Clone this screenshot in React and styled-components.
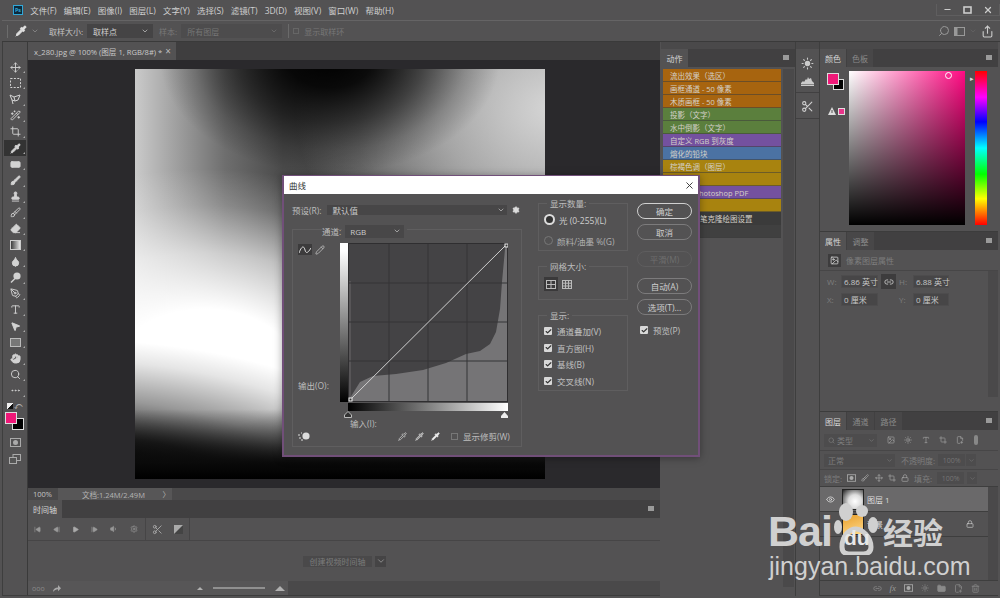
import React from 'react';
import styled, { createGlobalStyle } from 'styled-components';
import {
  Move, Wand2, Crop, Pipette, Bandage, Brush, Stamp, Eraser, Droplet, Search, PenTool, Type,
  MousePointer2, Hand, MoreHorizontal, ChevronDown, X, Minus, Share, Settings, Link2, Scissors, Play,
  SkipBack, StepBack, StepForward, Volume1, Lock, Eye, Folder, FilePlus2, Trash2, Image, Pencil, Check,
  Sun,
} from 'lucide-react';

const Global = createGlobalStyle`
  html, body { margin: 0; padding: 0; background: #535253; }
  * { box-sizing: border-box; }
  body { font-family: "Open Sans", "Noto Sans CJK SC", sans-serif; font-size: 8px; color: #c4c4c4; }
`;

const menus = ['文件(F)', '编辑(E)', '图像(I)', '图层(L)', '文字(Y)', '选择(S)', '滤镜(T)', '3D(D)', '视图(V)', '窗口(W)', '帮助(H)'];

const tools = [
  [Move], [null, 'marquee'], [null, 'lasso'], [Wand2], [Crop], [Pipette], [Bandage], [Brush], [Stamp], [Brush], [Eraser],
  [null, 'gradient'], [Droplet], [null, 'dodge'], [PenTool], [Type], [MousePointer2], [null, 'rect'], [Hand], [Search], [MoreHorizontal],
];
const filledTools = [5, 6, 7, 8, 10, 12, 16, 18];

const actions = [
  ['流出效果（选区）', '#a7640f'], ['画框通道 - 50 像素', '#a7640f'], ['木质画框 - 50 像素', '#a7640f'],
  ['投影（文字）', '#5b7f3d'], ['水中倒影（文字）', '#5b7f3d'], ['自定义 RGB 到灰度', '#74519f'],
  ['熔化的铅块', '#4b72a3'], ['棕褐色调（图层）', '#a8830f'], ['四分颜色', '#a8830f'],
  ['存储为 Photoshop PDF', '#74519f'], ['渐变映射', '#a8830f'], ['混合器画笔克隆绘图设置', '#3b3b3b'], ['', '#404040'],
];

const App = () => (
  <Shell>
    <Global />
    <MenuBar>
      <PsLogo>Ps</PsLogo>
      {menus.map((m) => <MenuItem key={m}>{m}</MenuItem>)}
      <WindowButtons>
        <Minus size={9} strokeWidth={3} />
        <MaxIcon />
        <X size={10} strokeWidth={3} />
      </WindowButtons>
    </MenuBar>

    <OptionsBar>
      <Grip />
      <Pipette size={12} color="#e0e0e0" fill="#e0e0e0" />
      <ChevronDown size={8} color="#999" />
      <OptLabel $ml={6}>取样大小:</OptLabel>
      <OptSelect $w={66}>取样点<ChevronDown size={8} /></OptSelect>
      <OptLabel $dim $ml={2}>样本:</OptLabel>
      <OptSelect $w={101} $dim>所有图层<ChevronDown size={8} /></OptSelect>
      <OptDivider />
      <OptCheck />
      <OptLabel $dim $ml={1}>显示取样环</OptLabel>
      <OptRight>
        <Search size={12} color="#999" style={{ transform: 'scaleX(-1)' }} />
        <WorkspaceIcon />
        <ChevronDown size={8} color="#666" />
        <Share size={13} color="#ccc" />
      </OptRight>
    </OptionsBar>

    <Main>
      <ToolBar>
        {tools.map(([Icon, kind], i) => (
          <Tool key={i} $active={i === 5}>
            {Icon && <Icon size={11} color="#d2d2d2" fill={filledTools.includes(i) ? '#d2d2d2' : 'none'} strokeWidth={2} />}
            {kind === 'marquee' && <MarqueeIcon />}
            {kind === 'lasso' && <LassoIcon />}
            {kind === 'gradient' && <GradientIcon />}
            {kind === 'dodge' && <DodgeIcon />}
            {kind === 'rect' && <RectIcon />}
          </Tool>
        ))}
        <SwapRow>
          <MiniSwap />
          <span>⤺</span>
        </SwapRow>
        <ToolColors>
          <BackColor />
          <ForeColor />
        </ToolColors>
        <MaskTool><MaskIcon /></MaskTool>
        <MaskTool><ScreenIcon /></MaskTool>
      </ToolBar>

      <Center>
        <TabBar>
          <DocTab>x_280.jpg @ 100% (图层 1, RGB/8#) *<TabClose>×</TabClose></DocTab>
        </TabBar>
        <DocArea>
          <Picture />
        </DocArea>
        <StatusBar>
          <Zoom>100%</Zoom>
          <DocInfo>文档:1.24M/2.49M<span>〉</span></DocInfo>
        </StatusBar>
        <Timeline>
          <PanelTabs>
            <PanelTab $active $w={34}>时间轴</PanelTab>
            <PanelMenu />
          </PanelTabs>
          <TimelineControls>
            <TimeBtns>
              <SkipBack size={7} fill="#999" color="#999" />
              <StepBack size={7} fill="#999" color="#999" />
              <Play size={7} fill="#aaa" color="#aaa" />
              <StepForward size={7} fill="#999" color="#999" />
              <Volume1 size={8} fill="#999" color="#999" />
              <Settings size={8} color="#999" />
            </TimeBtns>
            <CutBtns>
              <Scissors size={11} color="#a8a8a8" />
              <TransitionIcon />
            </CutBtns>
          </TimelineControls>
          <TimelineBody>
            <CreateBtn>创建视频时间轴</CreateBtn>
            <CreateDrop><ChevronDown size={10} /></CreateDrop>
          </TimelineBody>
          <TimelineFooter>
            <FooterLit>
              <Ooo>ooo</Ooo>
              <ArrowIcon />
              <Slider>
                <Tri $s={3} />
                <SliderTrack />
                <Tri $s={5} />
              </Slider>
            </FooterLit>
          </TimelineFooter>
        </Timeline>
      </Center>

      <ActionsColumn>
        <ArrowStrip />
        <PanelTabs>
          <PanelTab $active $w={27}>动作</PanelTab>
          <PanelMenu />
        </PanelTabs>
        <ActionsBody>
          <ActionList>
            {actions.map(([t, c], i) => <ActionRow key={i} $c={c}>{t}</ActionRow>)}
          </ActionList>
          <ScrollTrack $w={11} />
        </ActionsBody>
      </ActionsColumn>

      <IconStrip>
        <ArrowStrip />
        <StripGroup $h={44}>
          <Sun size={13} color="#ccc" fill="#ccc" />
          <HistogramIcon />
        </StripGroup>
        <StripGroup $h={26}>
          <Scissors size={13} color="#d0d0d0" />
        </StripGroup>
      </IconStrip>

      <RightColumn>
        <ArrowStrip />
        <Panel $h={183}>
          <PanelTabs>
            <PanelTab $active $w={26}>颜色</PanelTab>
            <PanelTab $w={26}>色板</PanelTab>
            <PanelMenu />
          </PanelTabs>
          <ColorBody>
            <ColorSide>
              <Swatches>
                <SwBack />
                <SwFore />
              </Swatches>
              <Gamut>
                <WarnIcon />
                <GamutChip />
              </Gamut>
            </ColorSide>
            <SvField><SvCursor /></SvField>
            <HueArrow>▸</HueArrow>
            <HueBar />
          </ColorBody>
        </Panel>

        <Panel $h={180}>
          <PanelTabs>
            <PanelTab $active $w={26}>属性</PanelTab>
            <PanelTab $w={27}>调整</PanelTab>
            <PanelMenu />
          </PanelTabs>
          <PropHead>
            <PropIcon><Image size={9} color="#ddd" /></PropIcon>
            <DimText>像素图层属性</DimText>
          </PropHead>
          <PropBody>
            <PropGrid>
              <DimText>W:</DimText>
              <PropField>6.86 英寸</PropField>
              <LinkBtn><Link2 size={10} color="#ccc" /></LinkBtn>
              <DimText>H:</DimText>
              <PropField>6.88 英寸</PropField>
              <DimText>X:</DimText>
              <PropField>0 厘米</PropField>
              <span />
              <DimText>Y:</DimText>
              <PropField>0 厘米</PropField>
            </PropGrid>
            <ScrollTrack $w={10} />
          </PropBody>
        </Panel>

        <Panel $grow>
          <PanelTabs>
            <PanelTab $active $w={26}>图层</PanelTab>
            <PanelTab $w={27}>通道</PanelTab>
            <PanelTab $w={27}>路径</PanelTab>
            <PanelMenu />
          </PanelTabs>
          <FilterRow>
            <SmallSelect $w={53}><Search size={7} />类型<ChevronDown size={7} /></SmallSelect>
            <FilterIcons>
              <Image size={8} /><Sun size={8} /><Type size={8} /><Crop size={8} /><FilePlus2 size={8} />
            </FilterIcons>
            <FilterToggle />
          </FilterRow>
          <BlendRow>
            <SmallSelect $w={71}>正常<ChevronDown size={7} /></SmallSelect>
            <DimText>不透明度:</DimText>
            <SmallBox>100%</SmallBox>
            <SmallDrop><ChevronDown size={7} /></SmallDrop>
          </BlendRow>
          <LockRow>
            <DimText>锁定:</DimText>
            <LockIcons>
              <MaskIcon small /><Brush size={8} /><Move size={8} /><Crop size={8} /><Lock size={8} />
            </LockIcons>
            <DimText>填充:</DimText>
            <SmallBox>100%</SmallBox>
            <SmallDrop><ChevronDown size={7} /></SmallDrop>
          </LockRow>
          <LayerList>
            <LayerStack>
              <LayerRow $active>
                <Eye size={9} color="#ddd" />
                <LayerThumb $kind="gray" />
                <LayerName>图层 1</LayerName>
              </LayerRow>
              <LayerRow>
                <span />
                <LayerThumb $kind="orange" />
                <LayerName>背景</LayerName>
                <LayerLock><Lock size={8} /></LayerLock>
              </LayerRow>
            </LayerStack>
            <ScrollTrack $w={10} />
          </LayerList>
          <LayersFooter>
            <Link2 size={9} /><FxText>fx</FxText><MaskIcon small /><Sun size={8} /><Folder size={9} fill="#8a8a8a" /><FilePlus2 size={9} /><Trash2 size={9} />
          </LayersFooter>
        </Panel>
      </RightColumn>
    </Main>

    <Dialog>
      <DialogTitle>曲线<X size={11} color="#333" /></DialogTitle>
      <DialogBody>
        <LeftCol>
          <PresetRow>
            <Label>预设(R):</Label>
            <PresetSelect>默认值<ChevronDown size={8} /></PresetSelect>
            <Settings size={8} color="#ddd" fill="#ddd" />
          </PresetRow>
          <CurveGroup>
            <ChannelRow>
              <Label>通道:</Label>
              <ChannelSelect>RGB<ChevronDown size={8} /></ChannelSelect>
            </ChannelRow>
            <GraphRow>
              <GraphTools>
                <ToolPair>
                  <CurveBtn>
                    <svg width="12" height="8" viewBox="0 0 12 8"><path d="M0 7C3 -1 5 0 6 4s3 3 6-2" fill="none" stroke="#ddd" strokeWidth="1" /></svg>
                  </CurveBtn>
                  <Pencil size={10} color="#bbb" />
                </ToolPair>
                <Label>输出(O):</Label>
              </GraphTools>
              <GraphGrid>
                <VRamp />
                <CurvesChart />
                <span />
                <HRamp />
                <span />
                <Handles><OpenTri /><SolidTri /></Handles>
              </GraphGrid>
            </GraphRow>
            <InputLabel>输入(I):</InputLabel>
            <GraphBottom>
              <HandPick />
              <Droppers>
                <Pipette size={9} color="#ccc" fill="#555" />
                <Pipette size={9} color="#ccc" fill="#999" />
                <Pipette size={9} color="#ddd" fill="#eee" />
              </Droppers>
              <EmptyBox />
              <Label>显示修剪(W)</Label>
            </GraphBottom>
          </CurveGroup>
        </LeftCol>

        <MiddleCol>
          <OptGroup $h={48}>
            <Legend>显示数量:</Legend>
            <RadioRow $on>光 (0-255)(L)</RadioRow>
            <RadioRow>颜料/油墨 %(G)</RadioRow>
          </OptGroup>
          <OptGroup $h={34}>
            <Legend>网格大小:</Legend>
            <GridBtns>
              <GridBtn $on><GridGlyph /></GridBtn>
              <GridBtn><GridGlyph dense /></GridBtn>
            </GridBtns>
          </OptGroup>
          <OptGroup $h={76}>
            <Legend>显示:</Legend>
            <CheckList>
              {['通道叠加(V)', '直方图(H)', '基线(B)', '交叉线(N)'].map((t) => (
                <CheckRow key={t}><CheckBox><Check size={7} strokeWidth={4} /></CheckBox>{t}</CheckRow>
              ))}
            </CheckList>
          </OptGroup>
        </MiddleCol>

        <ButtonCol>
          <DlgButton $primary>确定</DlgButton>
          <DlgButton $mt={5}>取消</DlgButton>
          <DlgButton $mt={11} $off>平滑(M)</DlgButton>
          <DlgButton $mt={11}>自动(A)</DlgButton>
          <DlgButton $mt={5}>选项(T)...</DlgButton>
          <PreviewRow><CheckBox><Check size={7} strokeWidth={4} /></CheckBox>预览(P)</PreviewRow>
        </ButtonCol>
      </DialogBody>
    </Dialog>

    <Watermark>
      <PawMark />
      <WmBrand>Bai</WmBrand>
      <WmDu>du</WmDu>
      <WmCn>经验</WmCn>
      <WmUrl>jingyan.baidu.com</WmUrl>
    </Watermark>
  </Shell>
);

export default App;

// Small drawings
const MaxIcon = () => (
  <svg width="9" height="8" viewBox="0 0 9 8"><rect x="1" y="1" width="7" height="6" fill="none" stroke="#ccc" strokeWidth="1.6" /></svg>
);
const WorkspaceIcon = () => (
  <svg width="11" height="9" viewBox="0 0 11 9"><rect x="0.5" y="0.5" width="10" height="8" fill="#555" stroke="#999" /><rect x="0.5" y="0.5" width="3" height="8" fill="#999" /></svg>
);
const MarqueeIcon = () => (
  <svg width="11" height="10" viewBox="0 0 11 10"><rect x="0.5" y="0.5" width="10" height="9" fill="none" stroke="#d2d2d2" strokeDasharray="2 1.4" /></svg>
);
const LassoIcon = () => (
  <svg width="12" height="11" viewBox="0 0 12 11"><path d="M1 1l4 2 6-2-2 5-3 1-3-1zM3 6l1 4M6 7L5 3" fill="none" stroke="#d2d2d2" strokeWidth="1" /></svg>
);
const GradientIcon = () => (
  <svg width="11" height="10" viewBox="0 0 11 10"><defs><linearGradient id="gr"><stop offset="0" stopColor="#333" /><stop offset="1" stopColor="#eee" /></linearGradient></defs><rect x="0.5" y="0.5" width="10" height="9" fill="url(#gr)" stroke="#ccc" /></svg>
);
const DodgeIcon = () => (
  <svg width="11" height="11" viewBox="0 0 11 11"><circle cx="7" cy="4" r="3.6" fill="#d2d2d2" /><path d="M5 6.5L1 10.5" stroke="#d2d2d2" strokeWidth="1.4" /></svg>
);
const RectIcon = () => (
  <svg width="11" height="9" viewBox="0 0 11 9"><rect x="0.5" y="0.5" width="10" height="8" fill="#777" stroke="#bbb" /></svg>
);
const MaskIcon = ({ small }) => (
  <svg width={small ? 9 : 11} height={small ? 8 : 9} viewBox="0 0 11 9"><rect x="0.5" y="0.5" width="10" height="8" fill="none" stroke="#aaa" /><circle cx="5.5" cy="4.5" r="2.5" fill="#aaa" /></svg>
);
const ScreenIcon = () => (
  <svg width="12" height="10" viewBox="0 0 12 10"><rect x="4" y="0.5" width="7.5" height="6" fill="none" stroke="#aaa" /><rect x="0.5" y="3.5" width="7" height="6" fill="#555" stroke="#aaa" /></svg>
);
const WarnIcon = () => (
  <svg width="8" height="8" viewBox="0 0 8 8"><path d="M4 0l4 8H0z" fill="#ddd" /><path d="M3.6 3h.8v3h-.8z" fill="#333" /></svg>
);
const TransitionIcon = () => (
  <svg width="9" height="9" viewBox="0 0 9 9"><rect width="9" height="9" fill="#aaa" /><path d="M0 9L9 0v9z" fill="#444" /></svg>
);
const ArrowIcon = () => (
  <svg width="8" height="7" viewBox="0 0 8 7"><path d="M0 7C0 4 2 2.5 5 2.5V0l3 3.2-3 3V4.2C3 4.2 1.5 5 0 7z" fill="#a8a8a8" /></svg>
);
const HistogramIcon = () => (
  <svg width="13" height="9" viewBox="0 0 13 9"><path d="M0 9V6l2-2 1 1 2-3 1 1 1-3 1 2 2-1 1 3 2 2v3z" fill="#ccc" /><path d="M0 7.5h13" stroke="#555" strokeWidth=".6" /></svg>
);
const OpenTri = () => (
  <svg width="8" height="7" viewBox="0 0 8 7"><path d="M.5 6.5V4L4 .5 7.5 4v2.5z" fill="#333" stroke="#bbb" /></svg>
);
const SolidTri = () => (
  <svg width="7" height="6" viewBox="0 0 7 6"><path d="M0 6V4L3.5 0 7 4v2z" fill="#eee" /></svg>
);
const HandPick = () => (
  <svg width="12" height="9" viewBox="0 0 12 9"><circle cx="8" cy="4" r="3.6" fill="#ddd" /><path d="M0 3h2M1 6h2M3 1h1M3 8h2" stroke="#ddd" /></svg>
);
const GridGlyph = ({ dense }) => (
  <svg width="10" height="9" viewBox="0 0 10 9">
    <rect x="0.5" y="0.5" width="9" height="8" fill="none" stroke="#bbb" />
    <path d={dense ? 'M3.5 0v9M6.5 0v9M0 3.2h10M0 6h10' : 'M5 0v9M0 4.5h10'} stroke="#bbb" />
  </svg>
);
const PawMark = () => (
  <PawSvg viewBox="0 0 44 52">
    <ellipse cx="12" cy="9" rx="7" ry="9" fill="#d0d0d0" />
    <ellipse cx="28" cy="8" rx="6" ry="6" fill="#d0d0d0" />
    <ellipse cx="4" cy="24" rx="4" ry="7" fill="#d0d0d0" />
    <ellipse cx="39" cy="22" rx="5" ry="8" fill="#d0d0d0" />
    <path d="M8 44c0-12 8-18 14-18s15 8 15 18c0 8-8 7-15 7s-14 1-14-7z" fill="none" stroke="#d0d0d0" strokeWidth="5" />
  </PawSvg>
);
const CurvesChart = () => (
  <svg width="160" height="159" viewBox="0 0 160 159" style={{ display: 'block' }}>
    <rect width="160" height="159" fill="#444345" />
    <path d="M2 157 L2 155 L12 139 L25 133 L48 131 L75 127 L98 120 L118 111 L132 108 L142 101 L148 89 L152 66 L154 39 L157 6 L159 0 L159 158 L2 158 Z" fill="#757476" />
    <path d="M2 156V38" stroke="#6a696b" strokeWidth="1" />
    <path d="M41 0v158M80 0v158M119 0v158M0 40h160M0 79h160M0 118h160" stroke="#353436" strokeWidth="1" />
    <rect x="0.5" y="0.5" width="159" height="158" fill="none" stroke="#2f2e30" />
    <path d="M2.5 156.5L158 2" stroke="#cfcfcf" strokeWidth="1" />
    <rect x="1" y="155" width="3" height="3" fill="#333" stroke="#eee" />
    <rect x="157" y="1" width="3" height="3" fill="#333" stroke="#eee" />
  </svg>
);

// Styled Components
const Shell = styled.div`
  position: relative;
  width: 1000px;
  height: 598px;
  overflow: hidden;
  display: flex;
  flex-direction: column;
  background: #535253;
`;

const MenuBar = styled.div`
  height: 20px;
  flex: none;
  display: flex;
  align-items: center;
  padding-left: 13px;
  gap: 7.2px;
  font-size: 8.5px;
  position: relative;
`;

const PsLogo = styled.div`
  width: 10px;
  height: 10px;
  margin-right: 0;
  background: #0e2a3c;
  border: 1px solid #31a8d8;
  color: #31a8d8;
  font-size: 5.5px;
  font-weight: 700;
  line-height: 8px;
  text-align: center;
`;

const MenuItem = styled.span`
  color: #cfcfcf;
  white-space: nowrap;
`;

const WindowButtons = styled.div`
  margin-left: auto;
  width: 64px;
  height: 12px;
  display: flex;
  align-items: center;
  justify-content: space-around;
  color: #ccc;
  border: 1px solid #5f5e5f;
  border-top: none;
`;

const OptionsBar = styled.div`
  height: 22px;
  flex: none;
  display: flex;
  align-items: center;
  gap: 4px;
  padding: 0 6px 0 5px;
  border-top: 1px solid #656465;
  border-bottom: 1px solid #3a3a3a;
  margin: 0 0 0 2px;
`;

const Grip = styled.div`
  width: 1px;
  height: 13px;
  background: #6c6c6c;
  margin-right: 3px;
`;

const OptLabel = styled.span`
  color: ${(p) => (p.$dim ? '#777' : '#c4c4c4')};
  margin-left: ${(p) => p.$ml || 0}px;
  white-space: nowrap;
`;

const OptSelect = styled.div`
  width: ${(p) => p.$w}px;
  height: 14px;
  flex: none;
  padding: 0 4px 0 6px;
  display: flex;
  align-items: center;
  justify-content: space-between;
  background: ${(p) => (p.$dim ? '#4d4c4d' : '#454445')};
  color: ${(p) => (p.$dim ? '#757575' : '#d0d0d0')};
`;

const OptDivider = styled.div`
  width: 1px;
  height: 14px;
  background: #6a6a6a;
  margin-left: 2px;
`;

const OptCheck = styled.div`
  width: 6px;
  height: 6px;
  border: 1px solid #666;
`;

const OptRight = styled.div`
  margin-left: auto;
  display: flex;
  align-items: center;
  gap: 4px;
`;

const Main = styled.div`
  flex: 1;
  min-height: 0;
  display: flex;
`;

const ToolBar = styled.div`
  width: 26px;
  flex: none;
  margin-left: 2px;
  padding: 17px 1px 0 1px;
  border-right: 1px solid #3a3a3a;
  border-left: 1px solid #3e3e3e;
  border-bottom: 1px solid #3e3e3e;
  margin-bottom: 2px;
  display: flex;
  flex-direction: column;
  align-items: stretch;
`;

const Tool = styled.div`
  height: 16.2px;
  flex: none;
  position: relative;
  display: flex;
  align-items: center;
  justify-content: center;
  background: ${(p) => (p.$active ? '#333' : 'transparent')};

  &::after {
    content: '';
    position: absolute;
    right: 1px;
    bottom: 2px;
    border-left: 2px solid transparent;
    border-bottom: 2px solid #aaa;
  }
`;

const SwapRow = styled.div`
  height: 10px;
  margin-top: 2px;
  padding: 0 3px;
  display: flex;
  align-items: center;
  justify-content: space-between;
  font-size: 8px;
  color: #bbb;
`;

const MiniSwap = styled.div`
  width: 6px;
  height: 6px;
  background: linear-gradient(135deg, #eee 50%, #111 50%);
`;

const ToolColors = styled.div`
  position: relative;
  height: 22px;
  margin-top: 1px;
`;

const BackColor = styled.div`
  position: absolute;
  left: 8px;
  top: 6px;
  width: 12px;
  height: 12px;
  background: #000;
  border: 1px solid #ddd;
`;

const ForeColor = styled.div`
  position: absolute;
  left: 1px;
  top: 0;
  width: 12px;
  height: 12px;
  background: #ef1878;
  border: 1px solid #ddd;
`;

const MaskTool = styled.div`
  height: 17px;
  display: flex;
  align-items: center;
  justify-content: center;
`;

const Center = styled.div`
  flex: 1;
  min-width: 0;
  display: flex;
  flex-direction: column;
`;

const TabBar = styled.div`
  height: 18px;
  flex: none;
  display: flex;
  background: #3f3e3f;
`;

const DocTab = styled.div`
  width: 148px;
  display: flex;
  align-items: center;
  justify-content: space-between;
  padding: 0 5px 0 6px;
  background: #535253;
  color: #c9c9c9;
  font-size: 7.6px;
  white-space: nowrap;
`;

const TabClose = styled.span`
  font-size: 10px;
  color: #bbb;
`;

const DocArea = styled.div`
  height: 428px;
  flex: none;
  display: flex;
  align-items: flex-start;
  justify-content: center;
  padding-top: 9px;
  padding-right: 8px;
  background: #2a292c;
`;

const Picture = styled.div`
  width: 410px;
  height: 410px;
  flex: none;
  background:
    linear-gradient(to top, #000 0, #0a0a0a 4%, rgba(0, 0, 0, 0.55) 9%, rgba(0, 0, 0, 0) 17%),
    radial-gradient(ellipse 420px 210px at -70px 480px, #000 0, #000 35%, rgba(0, 0, 0, 0.8) 55%, rgba(0, 0, 0, 0.4) 72%, rgba(0, 0, 0, 0.1) 90%, rgba(0, 0, 0, 0) 100%),
    radial-gradient(ellipse 170px 115px at 195px -10px, #000 0, rgba(0, 0, 0, 0.9) 25%, rgba(0, 0, 0, 0.55) 55%, rgba(0, 0, 0, 0.2) 80%, rgba(0, 0, 0, 0) 100%),
    radial-gradient(ellipse 300px 200px at 70px 300px, #fff 0, #fff 30%, rgba(255, 255, 255, 0.65) 58%, rgba(255, 255, 255, 0.2) 82%, rgba(255, 255, 255, 0) 100%),
    radial-gradient(ellipse 260px 200px at 420px 40px, #d6d6d6 0, rgba(214, 214, 214, 0.6) 45%, rgba(214, 214, 214, 0) 100%),
    linear-gradient(to right, #cacaca 0, #a0a0a0 10%, #6e6e6e 22%, #4a4a4a 36%, #484848 55%, #5a5a5a 75%, #707070 100%);
`;

const StatusBar = styled.div`
  height: 12px;
  flex: none;
  display: flex;
  align-items: center;
  font-size: 7.5px;
  background: #4a494a;
`;

const Zoom = styled.div`
  width: 30px;
  padding-left: 5px;
  color: #c4c4c4;
`;

const DocInfo = styled.div`
  width: 114px;
  height: 100%;
  padding: 0 2px 0 24px;
  display: flex;
  align-items: center;
  justify-content: space-between;
  background: #575657;
  color: #b4b4b4;
`;

const Timeline = styled.div`
  flex: 1;
  display: flex;
  flex-direction: column;
  border-bottom: 1px solid #3c3c3c;
  margin-bottom: 2px;
`;

const PanelTabs = styled.div`
  height: 18px;
  flex: none;
  display: flex;
  align-items: stretch;
  padding-right: 6px;
  background: #414041;
`;

const PanelTab = styled.div`
  width: ${(p) => p.$w}px;
  flex: none;
  display: flex;
  align-items: center;
  justify-content: center;
  color: ${(p) => (p.$active ? '#d6d6d6' : '#8a8a8a')};
  background: ${(p) => (p.$active ? '#535253' : '#484748')};
  margin-right: 1px;
`;

const PanelMenu = styled.div`
  width: 6px;
  height: 5px;
  margin: 6px 0 0 auto;
  background: #9a9a9a;
`;

const TimelineControls = styled.div`
  height: 23px;
  flex: none;
  display: flex;
  align-items: stretch;
  border-bottom: 1px solid #464546;
`;

const TimeBtns = styled.div`
  width: 118px;
  padding: 0 7px 0 6px;
  display: flex;
  align-items: center;
  justify-content: space-between;
  border-right: 1px solid #464546;
`;

const CutBtns = styled.div`
  width: 44px;
  padding: 0 6px;
  display: flex;
  align-items: center;
  justify-content: space-between;
  border-right: 1px solid #464546;
`;

const TimelineBody = styled.div`
  flex: 1;
  display: flex;
  align-items: center;
  padding: 0 0 0 275px;
  gap: 3px;
`;

const CreateBtn = styled.div`
  width: 69px;
  height: 11px;
  display: flex;
  align-items: center;
  justify-content: center;
  background: #4a494a;
  color: #7c7c7c;
  white-space: nowrap;
`;

const CreateDrop = styled.div`
  width: 11px;
  height: 11px;
  display: flex;
  align-items: center;
  justify-content: center;
  background: #454445;
  color: #999;
`;

const TimelineFooter = styled.div`
  height: 14px;
  flex: none;
  background: #4a494a;
`;

const FooterLit = styled.div`
  width: 260px;
  height: 100%;
  padding-left: 4px;
  display: flex;
  align-items: center;
  background: #575657;
`;

const Ooo = styled.span`
  font-size: 7px;
  color: #888;
  margin-right: 8px;
`;

const Slider = styled.div`
  display: flex;
  align-items: center;
  margin-left: 136px;
  gap: 10px;
`;

const Tri = styled.div`
  width: 0;
  height: 0;
  border-left: ${(p) => p.$s}px solid transparent;
  border-right: ${(p) => p.$s}px solid transparent;
  border-bottom: ${(p) => p.$s}px solid #b0b0b0;
`;

const SliderTrack = styled.div`
  width: 52px;
  height: 2px;
  background: #909090;
`;

const ArrowStrip = styled.div`
  height: 7px;
  flex: none;
  background: #4a494a;
`;

const ActionsColumn = styled.div`
  width: 134px;
  flex: none;
  margin-left: 1px;
  display: flex;
  flex-direction: column;
  margin-bottom: 11px;
`;

const ActionsBody = styled.div`
  flex: 1;
  min-height: 0;
  display: flex;
  justify-content: space-between;
  padding: 2px 1px 0 2px;
`;

const ActionList = styled.div`
  width: 118px;
  flex: none;
`;

const ActionRow = styled.div`
  height: 13px;
  padding-left: 7px;
  display: flex;
  align-items: center;
  background: ${(p) => p.$c};
  border-bottom: 1px solid rgba(60, 60, 60, 0.55);
  color: #d4d0c8;
  font-size: 7.5px;
  white-space: nowrap;
`;

const ScrollTrack = styled.div`
  width: ${(p) => p.$w}px;
  flex: none;
  background: #4a494a;
`;

const IconStrip = styled.div`
  width: 25px;
  flex: none;
  border-left: 1px solid #3e3e3e;
  border-right: 1px solid #3e3e3e;
  margin-bottom: 2px;
`;

const StripGroup = styled.div`
  height: ${(p) => p.$h}px;
  display: flex;
  flex-direction: column;
  align-items: center;
  justify-content: space-evenly;
  padding-top: 2px;
  border-bottom: 1px solid #414041;
`;

const RightColumn = styled.div`
  width: 180px;
  flex: none;
  display: flex;
  flex-direction: column;
  padding-right: 2px;
  margin-bottom: 2px;
`;

const Panel = styled.div`
  ${(p) => (p.$grow ? 'flex: 1; min-height: 0;' : `height: ${p.$h}px; flex: none;`)}
  display: flex;
  flex-direction: column;
  border-bottom: 1px solid #3c3c3c;
`;

const ColorBody = styled.div`
  flex: 1;
  display: flex;
  align-items: flex-start;
  padding-top: 4px;
`;

const ColorSide = styled.div`
  width: 29px;
  flex: none;
  padding: 2px 0 0 7px;
`;

const Swatches = styled.div`
  position: relative;
  height: 20px;
`;

const SwBack = styled.div`
  position: absolute;
  left: 6px;
  top: 6px;
  width: 11px;
  height: 11px;
  background: #000;
  border: 1px solid #ddd;
`;

const SwFore = styled.div`
  position: absolute;
  left: 0;
  top: 0;
  width: 12px;
  height: 12px;
  background: #ef1878;
  border: 1px solid #ddd;
`;

const Gamut = styled.div`
  margin-top: 14px;
  display: flex;
  align-items: center;
  gap: 2px;
  margin-left: 1px;
`;

const GamutChip = styled.div`
  width: 7px;
  height: 7px;
  background: #e8348a;
  border: 1px solid #ddd;
`;

const SvField = styled.div`
  width: 116px;
  height: 154px;
  flex: none;
  position: relative;
  background:
    linear-gradient(to bottom, rgba(0, 0, 0, 0), #000),
    linear-gradient(to right, #fff, #ff0a82);
`;

const SvCursor = styled.div`
  position: absolute;
  left: 96px;
  top: 1px;
  width: 7px;
  height: 7px;
  border: 1px solid #fff;
  border-radius: 50%;
`;

const HueArrow = styled.div`
  width: 10px;
  flex: none;
  margin-top: 3px;
  text-align: right;
  font-size: 7px;
  color: #ddd;
  padding-right: 1px;
`;

const HueBar = styled.div`
  width: 12px;
  height: 154px;
  flex: none;
  background: linear-gradient(to bottom, #f00 0, #f0f 17%, #00f 33%, #0ff 50%, #0f0 67%, #ff0 83%, #f00 100%);
`;

const PropHead = styled.div`
  height: 21px;
  flex: none;
  display: flex;
  align-items: center;
  gap: 5px;
  padding-left: 8px;
  border-bottom: 1px solid #474647;
`;

const PropIcon = styled.div`
  width: 13px;
  height: 13px;
  display: flex;
  align-items: center;
  justify-content: center;
  background: #3d3c3d;
`;

const DimText = styled.span`
  color: #7e7e7e;
  font-size: 8px;
  white-space: nowrap;
`;

const PropBody = styled.div`
  flex: 1;
  min-height: 0;
  display: flex;
  justify-content: space-between;
  padding-bottom: 14px;
`;

const PropGrid = styled.div`
  display: grid;
  grid-template-columns: 11px 37px 15px 11px 36px;
  grid-auto-rows: 13px;
  row-gap: 5px;
  column-gap: 3px;
  padding: 4px 0 0 7px;
  align-items: center;
`;

const PropField = styled.div`
  height: 13px;
  display: flex;
  align-items: center;
  padding-left: 2px;
  background: #474647;
  border: 1px solid #4d4c4d;
  color: #c8c8c8;
  white-space: nowrap;
`;

const LinkBtn = styled.div`
  height: 15px;
  display: flex;
  align-items: center;
  justify-content: center;
  background: #3d3c3d;
`;

const FilterRow = styled.div`
  height: 21px;
  flex: none;
  display: flex;
  align-items: center;
  padding: 0 20px 0 4px;
  border-bottom: 1px solid #474647;
`;

const SmallSelect = styled.div`
  width: ${(p) => p.$w}px;
  height: 13px;
  padding: 0 2px 0 4px;
  display: flex;
  align-items: center;
  gap: 2px;
  background: #4d4c4d;
  color: #7e7e7e;

  svg:last-child {
    margin-left: auto;
  }
`;

const FilterIcons = styled.div`
  flex: 1;
  margin-left: 10px;
  display: flex;
  justify-content: space-between;
  color: #a0a0a0;
`;

const FilterToggle = styled.div`
  width: 4px;
  height: 10px;
  margin-left: 10px;
  border-radius: 2px;
  background: #888;
`;

const BlendRow = styled.div`
  height: 19px;
  flex: none;
  display: flex;
  align-items: center;
  gap: 3px;
  padding-left: 4px;
  border-bottom: 1px solid #474647;

  ${SmallSelect} {
    margin-right: 3px;
  }
`;

const SmallBox = styled.div`
  width: 27px;
  height: 12px;
  display: flex;
  align-items: center;
  justify-content: center;
  background: #4d4c4d;
  color: #757575;
  font-size: 7px;
`;

const SmallDrop = styled.div`
  width: 10px;
  height: 12px;
  display: flex;
  align-items: center;
  justify-content: center;
  background: #4d4c4d;
  color: #757575;
  margin-left: -2px;
`;

const LockRow = styled.div`
  height: 17px;
  flex: none;
  display: flex;
  align-items: center;
  padding-left: 4px;
  gap: 5px;
  border-bottom: 1px solid #3e3e3e;
`;

const LockIcons = styled.div`
  width: 62px;
  display: flex;
  align-items: center;
  justify-content: space-between;
  color: #a8a8a8;
`;

const LayerList = styled.div`
  flex: 1;
  min-height: 0;
  display: flex;
  justify-content: space-between;
`;

const LayerStack = styled.div`
  flex: 1;
`;

const LayerRow = styled.div`
  height: 25px;
  display: grid;
  grid-template-columns: 13px 22px 1fr 22px;
  column-gap: 3px;
  align-items: center;
  padding-left: 6px;
  background: ${(p) => (p.$active ? '#6a696a' : '#535253')};
  border-bottom: 1px solid #3e3e3e;
`;

const LayerThumb = styled.div`
  height: 21px;
  border: 1px solid #222;
  background: ${(p) => (p.$kind === 'gray'
    ? 'radial-gradient(circle at 60% 60%, #fff 0, #ddd 40%, #222 100%)'
    : 'linear-gradient(160deg, #e9a02c, #ffd98a)')};
`;

const LayerName = styled.span`
  color: #ddd;
`;

const LayerLock = styled.span`
  color: #ccc;
`;

const LayersFooter = styled.div`
  height: 15px;
  flex: none;
  display: flex;
  align-items: center;
  justify-content: flex-end;
  gap: 8px;
  padding-right: 18px;
  color: #8a8a8a;
  border-top: 1px solid #3e3e3e;
`;

const FxText = styled.span`
  font-family: "Liberation Serif", serif;
  font-style: italic;
  font-size: 9px;
  color: #999;
`;

const Dialog = styled.div`
  position: absolute;
  left: 282px;
  top: 175px;
  width: 418px;
  height: 282px;
  display: flex;
  flex-direction: column;
  background: #535253;
  border: 2px solid #714f79;
  border-top-width: 1px;
  box-shadow: 0 1px 8px rgba(0, 0, 0, 0.35);
`;

const DialogTitle = styled.div`
  height: 18px;
  flex: none;
  display: flex;
  align-items: center;
  justify-content: space-between;
  padding: 0 3px 0 5px;
  background: #fff;
  color: #333;
  font-size: 8.5px;
`;

const DialogBody = styled.div`
  flex: 1;
  display: flex;
  align-items: flex-start;
  padding: 9px 0 0 8px;
`;

const LeftCol = styled.div`
  width: 230px;
  flex: none;
`;

const Label = styled.span`
  color: #bdbdbd;
  font-size: 8.5px;
  white-space: nowrap;
`;

const PresetRow = styled.div`
  height: 14px;
  display: flex;
  align-items: center;
  gap: 5px;
`;

const PresetSelect = styled.div`
  width: 180px;
  height: 10px;
  display: flex;
  align-items: center;
  justify-content: space-between;
  padding: 0 2px 0 6px;
  background: #474647;
  color: #c8c8c8;
  font-size: 8.5px;
`;

const CurveGroup = styled.div`
  height: 218px;
  margin-top: 12px;
  border: 1px solid #5f5e5f;
`;

const ChannelRow = styled.div`
  height: 14px;
  margin-top: -6px;
  padding-left: 29px;
  display: flex;
  align-items: center;
  gap: 4px;
`;

const ChannelSelect = styled.div`
  width: 59px;
  height: 13px;
  display: flex;
  align-items: center;
  justify-content: space-between;
  padding: 0 3px 0 5px;
  background: #484748;
  color: #ccc;
  box-shadow: 0 0 0 3px #535253;
`;

const GraphRow = styled.div`
  margin-top: 5px;
  display: flex;
`;

const GraphTools = styled.div`
  width: 47px;
  height: 159px;
  padding: 1px 0 11px 5px;
  flex: none;
  display: flex;
  flex-direction: column;
  justify-content: space-between;
`;

const ToolPair = styled.div`
  display: flex;
  align-items: center;
  gap: 3px;
`;

const CurveBtn = styled.div`
  width: 14px;
  height: 11px;
  display: flex;
  align-items: center;
  justify-content: center;
  background: #3c3b3c;
`;

const GraphGrid = styled.div`
  display: grid;
  grid-template-columns: 8px 160px;
`;

const VRamp = styled.div`
  height: 159px;
  background: linear-gradient(to bottom, #fff 0, #fff 5%, #000 100%);
`;

const HRamp = styled.div`
  height: 8px;
  margin-top: 1px;
  background: linear-gradient(to right, #000 0, #fff 100%);
`;

const Handles = styled.div`
  display: flex;
  justify-content: space-between;
  align-items: flex-end;
  height: 7px;
  margin-left: -4px;
`;

const InputLabel = styled(Label)`
  display: block;
  margin: 0 0 0 57px;
  height: 11px;
  line-height: 11px;
`;

const GraphBottom = styled.div`
  margin-top: 1px;
  padding: 0 0 0 5px;
  display: flex;
  align-items: center;
`;

const Droppers = styled.div`
  margin-left: 88px;
  width: 42px;
  display: flex;
  justify-content: space-between;
`;

const EmptyBox = styled.div`
  width: 7px;
  height: 7px;
  margin: 0 5px 0 11px;
  border: 1px solid #777;
`;

const MiddleCol = styled.div`
  width: 90px;
  flex: none;
  margin-left: 16px;
  display: flex;
  flex-direction: column;
  gap: 15px;
`;

const OptGroup = styled.div`
  height: ${(p) => p.$h}px;
  border: 1px solid #5f5e5f;
  padding: 0 0 0 5px;
`;

const Legend = styled.div`
  display: table;
  height: 10px;
  line-height: 10px;
  margin: -5px 0 0 3px;
  padding: 0 3px;
  background: #535253;
  color: #bdbdbd;
  font-size: 8.5px;
`;

const RadioRow = styled.div`
  height: 21px;
  display: flex;
  align-items: center;
  gap: 4px;
  color: ${(p) => (p.$on ? '#cfcfcf' : '#b0b0b0')};
  font-size: 8.5px;
  white-space: nowrap;

  &::before {
    content: '';
    width: 7px;
    height: 7px;
    border-radius: 50%;
    background: ${(p) => (p.$on ? '#333' : 'transparent')};
    border: ${(p) => (p.$on ? '2px solid #ddd' : '1px solid #777')};
  }
`;

const GridBtns = styled.div`
  margin-top: 5px;
  display: flex;
  gap: 2px;
`;

const GridBtn = styled.div`
  width: 14px;
  height: 14px;
  display: flex;
  align-items: center;
  justify-content: center;
  background: ${(p) => (p.$on ? '#3a393a' : 'transparent')};
`;

const CheckList = styled.div`
  margin-top: 2px;
`;

const CheckRow = styled.div`
  height: 16.6px;
  display: flex;
  align-items: center;
  gap: 5px;
  color: #c0c0c0;
  font-size: 8.5px;
  white-space: nowrap;
`;

const CheckBox = styled.div`
  width: 8px;
  height: 8px;
  flex: none;
  display: flex;
  align-items: center;
  justify-content: center;
  border-radius: 1px;
  background: #d8d8d8;
  color: #333;
`;

const ButtonCol = styled.div`
  width: 55px;
  flex: none;
  margin-left: 9px;
`;

const DlgButton = styled.div`
  height: 16px;
  margin-top: ${(p) => p.$mt || 0}px;
  display: flex;
  align-items: center;
  justify-content: center;
  border-radius: 8px;
  border: 1px solid ${(p) => (p.$primary ? '#d0d0d0' : p.$off ? '#5e5d5e' : '#7c7b7c')};
  color: ${(p) => (p.$off ? '#6e6e6e' : '#cfcfcf')};
  font-size: 8.5px;
  white-space: nowrap;
`;

const PreviewRow = styled(CheckRow)`
  margin: 7px 0 0 3px;
`;

const Watermark = styled.div`
  position: absolute;
  left: 768px;
  top: 500px;
  width: 180px;
  height: 80px;
  color: #d0d0d0;
  pointer-events: none;
`;

const PawSvg = styled.svg`
  position: absolute;
  left: 60px;
  top: 3px;
  width: 56px;
  height: 52px;
`;

const WmBrand = styled.div`
  position: absolute;
  left: 0;
  top: 7px;
  font-family: "Liberation Sans", sans-serif;
  font-weight: 700;
  font-size: 43px;
  line-height: 48px;
  letter-spacing: -1px;
`;

const WmDu = styled.div`
  position: absolute;
  left: 76px;
  top: 26px;
  font-family: "Liberation Sans", sans-serif;
  font-weight: 700;
  font-size: 21px;
  line-height: 24px;
  color: #e8e8e8;
`;

const WmCn = styled.div`
  position: absolute;
  left: 115px;
  top: 13px;
  font-family: "Noto Sans CJK SC", sans-serif;
  font-weight: 700;
  font-size: 30px;
  line-height: 36px;
`;

const WmUrl = styled.div`
  position: absolute;
  left: 1px;
  top: 52px;
  font-family: "Liberation Sans", sans-serif;
  font-size: 25px;
  line-height: 28px;
`;
